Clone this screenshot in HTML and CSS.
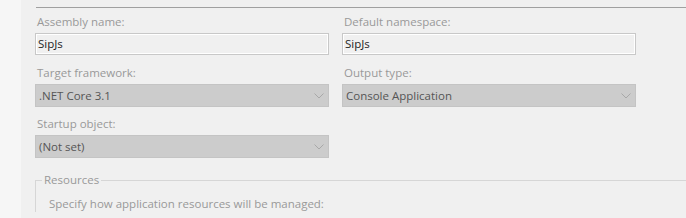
FILE: index.html
```html
<!DOCTYPE html>
<html>
<head>
<meta charset="utf-8">
<link rel="stylesheet" href="styles.css">
</head>
<body>
<div class="page">
  <div class="strip"></div>
  <div class="main">
    <div class="rule"></div>
    <div class="grid">
      <div class="field">
        <div class="label">Assembly name:</div>
        <div class="textbox">SipJs</div>
      </div>
      <div class="field">
        <div class="label">Default namespace:</div>
        <div class="textbox">SipJs</div>
      </div>
      <div class="field">
        <div class="label">Target framework:</div>
        <div class="combo"><span>.NET Core 3.1</span><svg class="chev" width="10" height="6" viewBox="0 0 10 6"><polyline points="0.5,0.5 5,5 9.5,0.5" fill="none" stroke="#a8a8a8" stroke-width="1"/></svg></div>
      </div>
      <div class="field">
        <div class="label">Output type:</div>
        <div class="combo"><span>Console Application</span><svg class="chev" width="10" height="6" viewBox="0 0 10 6"><polyline points="0.5,0.5 5,5 9.5,0.5" fill="none" stroke="#a8a8a8" stroke-width="1"/></svg></div>
      </div>
      <div class="field">
        <div class="label">Startup object:</div>
        <div class="combo"><span>(Not set)</span><svg class="chev" width="10" height="6" viewBox="0 0 10 6"><polyline points="0.5,0.5 5,5 9.5,0.5" fill="none" stroke="#a8a8a8" stroke-width="1"/></svg></div>
      </div>
    </div>
    <fieldset class="group">
      <legend>Resources</legend>
      <div class="desc">Specify how application resources will be managed:</div>
    </fieldset>
  </div>
</div>
</body>
</html>
```
FILE: styles.css
```css
html, body {
  margin: 0;
  padding: 0;
  background: #f0f0f0;
  overflow: hidden;
}
body {
  font-family: "Segoe UI", "Open Sans", sans-serif;
  font-size: 11.5px;
  width: 686px;
  height: 218px;
}
.page {
  display: flex;
  height: 218px;
  overflow: hidden;
}
.strip {
  width: 21px;
  flex: none;
  background: #f6f6f6;
}
.main {
  flex: 1;
  padding-left: 14px;
  padding-top: 7px;
  min-width: 0;
}
.rule {
  height: 1px;
  background: #a0a0a0;
  margin-left: 1px;
}
.grid {
  display: grid;
  grid-template-columns: 294px 294px;
  grid-auto-rows: 51px;
  column-gap: 13px;
  padding-top: 6px;
}
.label {
  height: 16px;
  line-height: 16px;
  color: #999999;
  padding-left: 2px;
  margin-bottom: 3px;
  white-space: nowrap;
}
.textbox {
  box-sizing: border-box;
  height: 22px;
  border: 1px solid #c8c8c8;
  box-shadow: inset 0 0 0 1px #ffffff;
  padding-left: 2px;
  line-height: 19px;
  color: #1e1e1e;
}
.combo {
  box-sizing: border-box;
  height: 23px;
  border: 1px solid #c4c4c4;
  background: #cccccc;
  padding-left: 3px;
  padding-right: 4px;
  display: flex;
  align-items: center;
  justify-content: space-between;
  color: #555555;
}
.chev {
  display: block;
}
.group {
  margin: 5px -20px 0 0;
  padding: 0 0 0 6px;
  border: 1px solid #d6d6d6;
  border-bottom: none;
}
.group legend {
  padding: 0 2px;
  line-height: 16px;
  color: #999999;
}
.desc {
  padding-top: 8px;
  padding-left: 7px;
  line-height: 16px;
  color: #999999;
}
```
